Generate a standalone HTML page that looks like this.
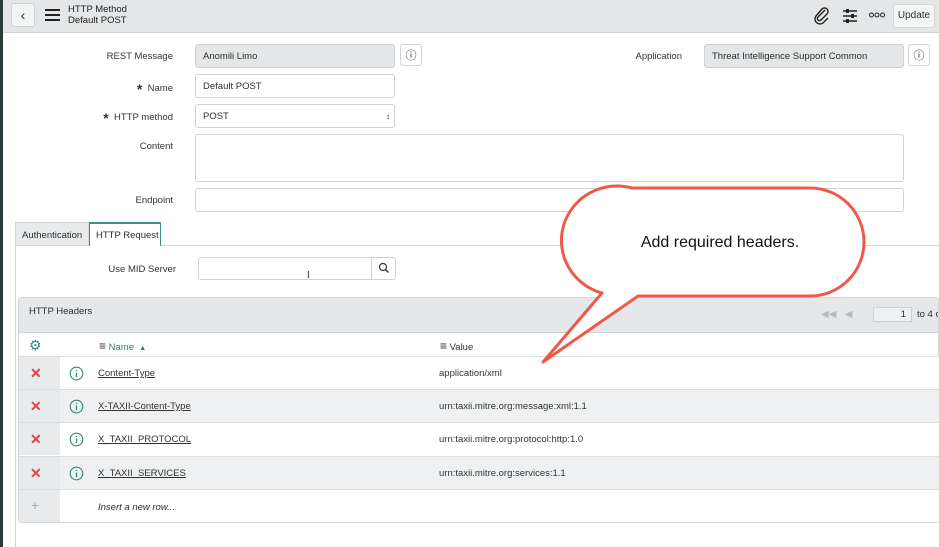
<!DOCTYPE html><html><head><style>
*{box-sizing:border-box;margin:0;padding:0}
body{width:939px;height:547px;overflow:hidden;background:#fff;font-family:"Liberation Sans",sans-serif;font-size:9.5px;color:#2e2e2e;position:relative}
.a{position:absolute}
.hdr{left:0;top:0;width:939px;height:33px;background:#e4e6e7;border-bottom:1px solid #cfd2d4}
.inp{position:absolute;border:1px solid #cfd2d4;border-radius:3px;background:#fff;padding-left:7px;font-size:9.5px;display:flex;align-items:center}
.ro{background:#e4e6e7}
.lbl{position:absolute;text-align:right;font-size:9.5px;color:#333}
.ib{position:absolute;width:22px;height:22px;border:1px solid #cfd2d4;border-radius:3px;background:#fff;display:flex;align-items:center;justify-content:center;font-size:11px}
.row{position:absolute;left:19px;width:920px;height:33px;border-top:1px solid #dcdee0}
.row .l{position:absolute;left:0;top:0;width:41px;height:100%;background:#e8eaeb}
.x{position:absolute;left:11px;top:8px;color:#e0453a;font-size:14px;font-weight:bold}
.nm{position:absolute;left:79px;top:11px;text-decoration:underline;color:#333}
.vl{position:absolute;left:420px;top:11px;color:#333}
.ic{position:absolute;left:50px;top:9px}
</style></head><body>
<div class="a hdr"></div>
<div class="a" style="left:0;top:0;width:3px;height:547px;background:#2c3a3c"></div>
<div class="a" style="left:11px;top:3px;width:24px;height:24px;border:1px solid #cfd2d4;border-radius:3px;background:#f4f5f5;font-size:14px;text-align:center;line-height:22px">&#8249;</div>
<div class="a" style="left:45px;top:9px;width:15px;height:2px;background:#222;box-shadow:0 5px 0 #222,0 10px 0 #222"></div>
<div class="a" style="left:68px;top:4px;font-size:9.5px;line-height:11px;color:#222">HTTP Method<br>Default POST</div>
<svg class="a" style="left:813px;top:7px" width="18" height="18" viewBox="0 0 18 18"><path d="M12 3 L5 10 a2 2 0 0 0 3 3 L14 7 a3.5 3.5 0 0 0 -5 -5 L3 9 a5 5 0 0 0 7 7 l5-5" fill="none" stroke="#222" stroke-width="1.4"/></svg>
<svg class="a" style="left:841px;top:7px" width="18" height="18"><path d="M2 4h14M2 9h14M2 14h14" stroke="#222" stroke-width="1.4"/><rect x="5" y="2" width="3" height="4" fill="#222"/><rect x="10" y="7" width="3" height="4" fill="#222"/><rect x="5" y="12" width="3" height="4" fill="#222"/></svg>
<svg class="a" style="left:869px;top:12px" width="16" height="6"><circle cx="2.5" cy="3" r="2" fill="none" stroke="#222"/><circle cx="8" cy="3" r="2" fill="none" stroke="#222"/><circle cx="13.5" cy="3" r="2" fill="none" stroke="#222"/></svg>
<div class="a" style="left:893px;top:4px;width:42px;height:24px;background:#f4f5f5;border:1px solid #d5d8da;border-radius:3px;font-size:10px;text-align:center;line-height:22px">Update</div>

<div class="lbl" style="left:80px;top:51px;width:93px">REST Message</div>
<div class="inp ro" style="left:195px;top:44px;width:200px;height:24px">Anomili Limo</div>
<div class="ib" style="left:400px;top:44px">&#9432;</div>
<div class="lbl" style="left:580px;top:51px;width:102px">Application</div>
<div class="inp ro" style="left:704px;top:44px;width:200px;height:24px">Threat Intelligence Support Common</div>
<div class="ib" style="left:908px;top:44px">&#9432;</div>
<div class="lbl" style="left:80px;top:81px;width:93px"><b style="font-size:14px;vertical-align:-3px">*</b>&nbsp;&nbsp;Name</div>
<div class="inp" style="left:195px;top:74px;width:200px;height:24px">Default POST</div>
<div class="lbl" style="left:80px;top:110px;width:93px"><b style="font-size:14px;vertical-align:-3px">*</b>&nbsp;&nbsp;HTTP method</div>
<div class="inp" style="left:195px;top:104px;width:200px;height:24px">POST<span style="position:absolute;right:4px;font-size:8px">&#8597;</span></div>
<div class="lbl" style="left:80px;top:141px;width:93px">Content</div>
<div class="inp" style="left:195px;top:134px;width:709px;height:48px"></div>
<div class="lbl" style="left:80px;top:195px;width:93px">Endpoint</div>
<div class="inp" style="left:195px;top:188px;width:709px;height:24px"></div>

<div class="a" style="left:15px;top:245px;width:924px;height:302px;border-left:1px solid #d5d8da;border-top:1px solid #d5d8da"></div>
<div class="a" style="left:15px;top:222px;width:74px;height:23px;background:#e8eaeb;border:1px solid #d5d8da;border-bottom:none;font-size:9.5px;padding:7px 0 0 6px;white-space:nowrap">Authentication</div>
<div class="a" style="left:89px;top:222px;width:72px;height:24px;background:#fff;border:1px solid #3f8f84;border-bottom:none;border-top-width:2px;font-size:9.5px;padding:6px 0 0 6px;white-space:nowrap">HTTP Request</div>
<div class="lbl" style="left:80px;top:264px;width:96px">Use MID Server</div>
<div class="inp" style="left:198px;top:257px;width:198px;height:23px"></div>
<svg class="a" style="left:378px;top:262px" width="12" height="12"><circle cx="5" cy="5" r="3.5" fill="none" stroke="#333" stroke-width="1.2"/><path d="M7.5 7.5l3 3" stroke="#333" stroke-width="1.3"/></svg>
<div class="a" style="left:371px;top:257px;width:1px;height:23px;background:#cfd2d4"></div>
<div class="a" style="left:307px;top:270px;font-size:10px">I</div>

<div class="a" style="left:18px;top:297px;width:921px;height:226px;border:1px solid #d5d8da;border-radius:3px;background:#fff;overflow:hidden">
 <div class="a" style="left:0;top:0;width:921px;height:35px;background:#e5e7e9;border-bottom:1px solid #cfd2d4"></div>
 <div class="a" style="left:10px;top:8px;font-size:9.5px">HTTP Headers</div>
 <div class="a" style="left:802px;top:11px;color:#b8bcc0;font-size:10px;white-space:nowrap">&#9664;&#9664;&nbsp;&nbsp;&nbsp;&#9664;</div>
 <div class="a" style="left:854px;top:9px;width:39px;height:15px;border:1px solid #cfd2d4;background:#eef0f1;text-align:right;padding-right:5px;font-size:9.5px;line-height:13px">1</div>
 <div class="a" style="left:898px;top:11px;font-size:9.5px;white-space:nowrap">to 4 o</div>
 <div class="a" style="left:10px;top:39px;color:#2e8a7c;font-size:14px">&#9881;</div>
 <div class="a" style="left:80px;top:41px;color:#2e7d73;font-size:9.5px"><span style="color:#333;font-size:12px">&#8801;</span> Name&nbsp;&nbsp;<span style="font-size:7px">&#9650;</span></div>
 <div class="a" style="left:421px;top:41px;font-size:9.5px"><span style="font-size:12px">&#8801;</span> Value</div>
</div>
<div class="row" style="top:356px;background:#fff"><div class="l"></div><span class="x">✕</span><svg class="ic" width="15" height="15"><circle cx="7.5" cy="7.5" r="6.3" fill="none" stroke="#2e8a6c" stroke-width="1.1"/><path d="M7.5 6.5v4.5M7.5 4v1" stroke="#2e8a6c" stroke-width="1.3"/></svg><span class="nm">Content-Type</span><span class="vl">application/xml</span></div>
<div class="row" style="top:389px;background:#eff0f1"><div class="l"></div><span class="x">✕</span><svg class="ic" width="15" height="15"><circle cx="7.5" cy="7.5" r="6.3" fill="none" stroke="#2e8a6c" stroke-width="1.1"/><path d="M7.5 6.5v4.5M7.5 4v1" stroke="#2e8a6c" stroke-width="1.3"/></svg><span class="nm">X-TAXII-Content-Type</span><span class="vl">urn:taxii.mitre.org:message:xml:1.1</span></div>
<div class="row" style="top:422px;background:#fff"><div class="l"></div><span class="x">✕</span><svg class="ic" width="15" height="15"><circle cx="7.5" cy="7.5" r="6.3" fill="none" stroke="#2e8a6c" stroke-width="1.1"/><path d="M7.5 6.5v4.5M7.5 4v1" stroke="#2e8a6c" stroke-width="1.3"/></svg><span class="nm">X_TAXII_PROTOCOL</span><span class="vl">urn:taxii.mitre.org:protocol:http:1.0</span></div>
<div class="row" style="top:456px;background:#eff0f1"><div class="l"></div><span class="x">✕</span><svg class="ic" width="15" height="15"><circle cx="7.5" cy="7.5" r="6.3" fill="none" stroke="#2e8a6c" stroke-width="1.1"/><path d="M7.5 6.5v4.5M7.5 4v1" stroke="#2e8a6c" stroke-width="1.3"/></svg><span class="nm">X_TAXII_SERVICES</span><span class="vl">urn:taxii.mitre.org:services:1.1</span></div>
<div class="row" style="top:489px;height:33px;background:#fff"><div class="l"></div><span class="a" style="left:12px;top:7px;color:#aaa;font-size:14px">+</span><span class="a" style="left:79px;top:12px;font-style:italic">Insert a new row...</span></div>

<svg class="a" style="left:0;top:0" width="939" height="547">
<path d="M632 188 H810 A54 54 0 0 1 810 296 H638 L543 362 L602 293 A55 54 0 0 1 632 188 Z" fill="#fff" stroke="#f0594a" stroke-width="3" stroke-linejoin="round"/>
<text x="720" y="247" text-anchor="middle" font-family="Liberation Sans" font-size="16" fill="#111">Add required headers.</text>
</svg>
</body></html>
